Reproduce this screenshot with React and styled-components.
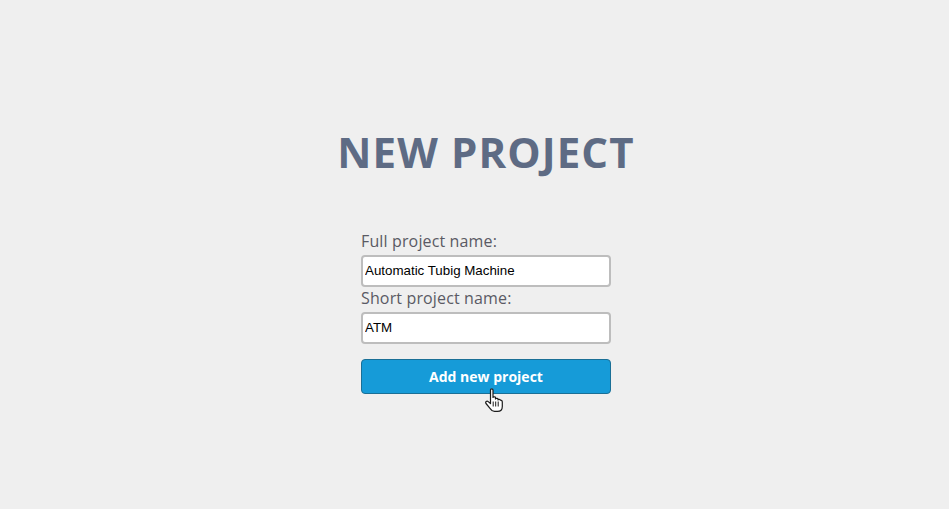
import React from 'react'
import styled, { createGlobalStyle } from 'styled-components'

const GlobalStyle = createGlobalStyle`
    html, body {
        margin: 0;
        background: #efefef;
    }
    body {
        font-family: "Open Sans", sans-serif;
    }
`

const Page = styled.div`
    height: 509px;
    overflow: hidden;
    display: flex;
    flex-direction: column;
    align-items: center;
    padding: 122px 0 0 23px;
    box-sizing: border-box;
`

const Title = styled.h1`
    margin: 0 0 48px;
    font-size: 42px;
    line-height: 60px;
    font-weight: 700;
    letter-spacing: 1.1px;
    color: #5e6b84;
`

const Form = styled.form`
    width: 250px;
    display: flex;
    flex-direction: column;
`

const Label = styled.label`
    margin: 1px 0 4px;
    font-size: 16px;
    line-height: 20px;
    letter-spacing: 0.14px;
    color: #5a5a64;
`

const Input = styled.input`
    display: block;
    box-sizing: border-box;
    width: 250px;
    height: 32px;
    margin: 0;
    padding: 0 2px 2px;
    background: #fff;
    border: 2px solid #bdbdbd;
    border-radius: 4px;
    outline: none;
    font-family: "Liberation Sans", Arial, sans-serif;
    font-size: 13.33px;
    color: #000;
`

const ButtonWrap = styled.div`
    position: relative;
    margin-top: 15px;
`

const Button = styled.button`
    display: block;
    width: 250px;
    height: 35px;
    padding: 0;
    background: #169bd8;
    border: 1px solid #1a6f96;
    border-radius: 4px;
    color: #fff;
    font-family: "Open Sans", sans-serif;
    font-size: 14px;
    font-weight: 700;
`

const Cursor = styled.svg`
    position: absolute;
    left: 124px;
    top: 29px;
    width: 18px;
    height: 24px;
`

const HandCursor = () => (
    <Cursor viewBox="0 0 18 24">
        <path
            d="M5.5 2C5.5 0.4 8 0.4 8 2V9.5C8 8.6 10.5 8.6 10.5 9.5V11C10.5 10 13 10 13 11V12C13 11 15.5 11 15.5 12.2C16.6 12.2 17.3 13 17.3 14.2V18.5C17.3 21.5 15.5 23.4 12.5 23.4H9.5C7.5 23.4 6.3 22.3 5.2 20.6L1 15.5C0 14 1.8 12.4 3.2 13.6L5.5 15.5V2Z"
            fill="#fff"
            stroke="#1c1c1c"
            strokeWidth="1.2"
            strokeLinejoin="round"
        />
        <path d="M8.2 13.5V18.5M10.7 13.5V18.5M13.2 13.5V18.5" stroke="#1c1c1c" strokeWidth="1" fill="none" />
    </Cursor>
)

export default function App() {
    return (
        <Page>
            <GlobalStyle />
            <Title>NEW PROJECT</Title>
            <Form onSubmit={e => e.preventDefault()}>
                <Label htmlFor="full-name">Full project name:</Label>
                <Input id="full-name" defaultValue="Automatic Tubig Machine" />
                <Label htmlFor="short-name">Short project name:</Label>
                <Input id="short-name" defaultValue="ATM" />
                <ButtonWrap>
                    <Button type="submit">Add new project</Button>
                    <HandCursor />
                </ButtonWrap>
            </Form>
        </Page>
    )
}
